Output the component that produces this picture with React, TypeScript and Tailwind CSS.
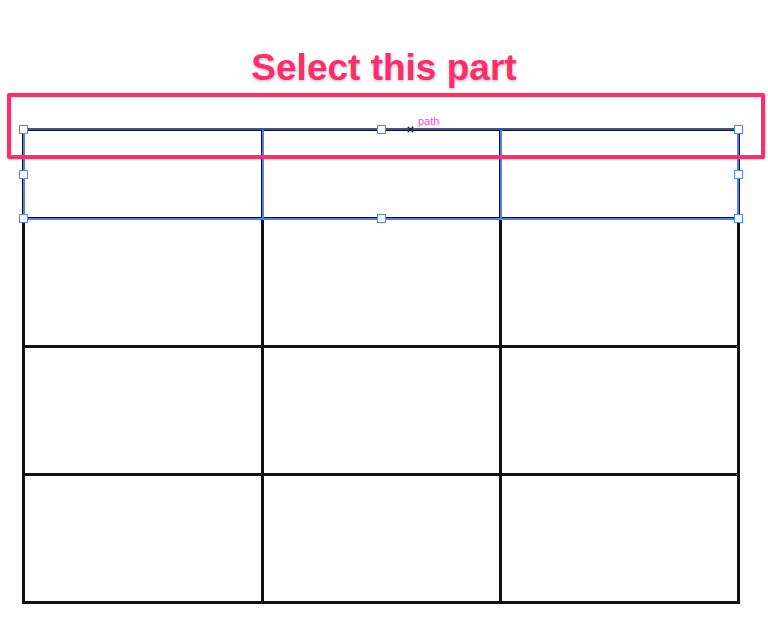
import React from "react";

function Handle() {
  return <div className="w-[9px] h-[9px] bg-white border border-[#4d86ff]" />;
}

export default function App() {
  const cells = Array.from({ length: 12 });
  return (
    <div className="relative w-[768px] h-[627px] bg-white overflow-hidden font-['Liberation_Sans',Arial,sans-serif]">
      <div className="pt-[46px] h-[90px] text-center">
        <div className="text-[37px] leading-[44px] font-bold text-[#fb2d6b] [text-shadow:0_0_2px_#fff,0_1px_3px_rgba(0,0,0,0.35)]">
          Select this part
        </div>
      </div>

      <div className="relative ml-[22px] mt-[38px] w-[719px]">
        {/* table drawing */}
        <div className="border-l-[3px] border-t-[3px] border-[#111] grid grid-cols-[239px_238px_238px] grid-rows-[89px_128px_128px_128px]">
          {cells.map((_, i) => (
            <div key={i} className="border-r-[3px] border-b-[3px] border-[#111]" />
          ))}
        </div>

        {/* selected row path */}
        <div className="absolute left-[1px] top-0 w-[716px] h-[92px] border-2 border-[#4f7ff0] border-t-[#3b5496] grid grid-cols-[239px_238px_235px]">
          <div className="border-r-2 border-[#4f7ff0]" />
          <div className="border-r-2 border-[#4f7ff0]" />
          <div />
        </div>

        {/* handles */}
        <div className="absolute -left-[3px] -top-[3px] w-[724px] h-[98px] flex flex-col justify-between">
          <div className="flex justify-between">
            <Handle />
            <Handle />
            <Handle />
          </div>
          <div className="flex justify-between">
            <Handle />
            <Handle />
          </div>
          <div className="flex justify-between">
            <Handle />
            <Handle />
            <Handle />
          </div>
        </div>

        {/* anchor marker */}
        <svg className="absolute left-[385px] -top-[2px]" width="7" height="7" viewBox="0 0 7 7">
          <path d="M0.8 0.8L6.2 6.2M6.2 0.8L0.8 6.2" stroke="#222" strokeWidth="1.4" />
        </svg>
        {/* path label */}
        <span className="absolute left-[396px] -top-[13px] text-[11px] leading-[12px] text-[#f23ff5]">path</span>

        {/* red highlight */}
        <div className="absolute -left-[15px] -top-[35px] w-[758px] h-[66px] border-4 border-[#fd2d6c] rounded-[2px] shadow-[0_0_2px_rgba(253,45,108,0.5)]" />
      </div>
    </div>
  );
}
